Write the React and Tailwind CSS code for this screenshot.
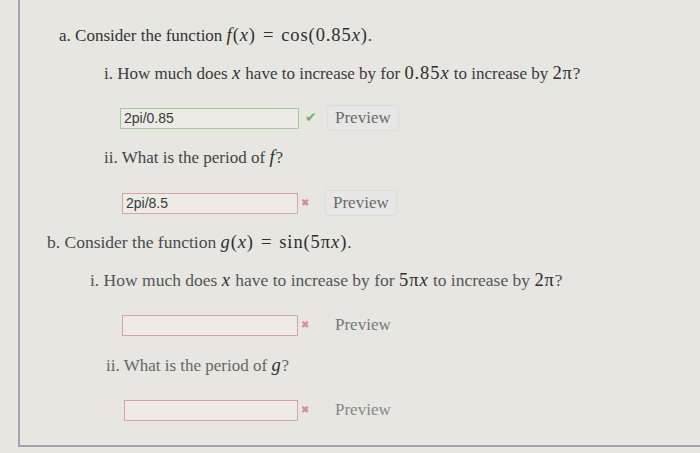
const serif = { fontFamily: '"Liberation Serif", "Times New Roman", serif' }

// MathJax-like inline math: a bit larger and looser than the running text
function M({ children }) {
  return <span className="text-[18.5px] tracking-[0.9px] text-[#2e2e2e]">{children}</span>
}

function Eq() {
  return <span className="mx-[7px]">=</span>
}

function Answer({ value, status, boxX, boxW, markX, btnX, btnBorder, tone }) {
  const border = status === 'ok' ? 'border-[#a9c99a]' : 'border-[#d9a3a3]'
  return (
    <div className="flex items-center h-[26px]">
      <div className={`${boxX} ${boxW} h-[21px] border ${border} bg-[#ecebe6] flex items-center px-[3px]`}>
        <span className="text-[14px] text-[#3a3a3a] leading-none" style={{ fontFamily: '"Liberation Sans", Arial, sans-serif' }}>
          {value}
        </span>
      </div>
      <span className={`${markX} w-[14px] text-center leading-none ${status === 'ok' ? 'text-[#79ad6c] text-[14px]' : 'text-[#d98a8a] text-[10px]'}`}>
        {status === 'ok' ? '✔' : '✖'}
      </span>
      <div
        className={`${btnX} h-[26px] px-[7px] flex items-center rounded-[4px] text-[17px] ${tone} ${
          btnBorder ? 'border border-[#dcdcdc] bg-[#e7e7e6]' : ''
        }`}
        style={serif}
      >
        Preview
      </div>
    </div>
  )
}

export default function App() {
  return (
    <div className="w-[700px] h-[453px] bg-[#e7e6e1] overflow-hidden">
      <div className="ml-[18px] w-[682px] h-[447px] border-l-2 border-b-2 border-[#a4a3ae]" style={serif}>
        {/* part a */}
        <div className="pt-[23px] pl-[39px] h-[47px] text-[17px] leading-[24px] text-[#333] whitespace-nowrap">
          a. Consider the function{' '}
          <M>
            <i>f</i>(<i>x</i>)<Eq />cos(0.85<i>x</i>)
          </M>
          .
        </div>
        <div className="mt-[14px] pl-[84px] h-[24px] text-[17px] leading-[24px] text-[#3a3a3a] whitespace-nowrap">
          i. How much does <M><i>x</i></M> have to increase by for <M>0.85<i>x</i></M> to increase by <M>2π</M>?
        </div>
        <div className="mt-[20px]">
          <Answer value="2pi/0.85" status="ok" boxX="ml-[100px]" boxW="w-[179px]" markX="ml-[5px]" btnX="ml-[9px]" btnBorder tone="text-[#6b6b6b]" />
        </div>
        <div className="mt-[14px] pl-[84px] h-[24px] text-[17px] leading-[24px] text-[#444]">
          ii. What is the period of <M><i>f</i></M>?
        </div>
        <div className="mt-[21px]">
          <Answer value="2pi/8.5" status="bad" boxX="ml-[102px]" boxW="w-[176px]" markX="ml-[0px]" btnX="ml-[13px]" btnBorder tone="text-[#6b6b6b]" />
        </div>

        {/* part b */}
        <div className="mt-[14px] pl-[27px] h-[24px] text-[17.5px] leading-[24px] text-[#4a4a4a] whitespace-nowrap">
          b. Consider the function{' '}
          <M>
            <i>g</i>(<i>x</i>)<Eq />sin(5π<i>x</i>)
          </M>
          .
        </div>
        <div className="mt-[14px] pl-[70px] h-[24px] text-[17.5px] leading-[24px] text-[#555] whitespace-nowrap">
          i. How much does <M><i>x</i></M> have to increase by for <M>5π<i>x</i></M> to increase by <M>2π</M>?
        </div>
        <div className="mt-[20px]">
          <Answer value="" status="bad" boxX="ml-[102px]" boxW="w-[176px]" markX="ml-[0px]" btnX="ml-[16px]" btnBorder={false} tone="text-[#777]" />
        </div>
        <div className="mt-[15px] pl-[86px] h-[24px] text-[17px] leading-[24px] text-[#666]">
          ii. What is the period of <M><i>g</i></M>?
        </div>
        <div className="mt-[20px]">
          <Answer value="" status="bad" boxX="ml-[104px]" boxW="w-[174px]" markX="ml-[0px]" btnX="ml-[16px]" btnBorder={false} tone="text-[#888]" />
        </div>
      </div>
    </div>
  )
}
